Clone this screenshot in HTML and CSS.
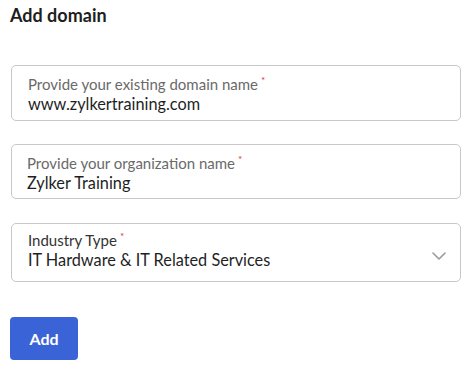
FILE: index.html
```html
<!DOCTYPE html>
<html>
<head>
<meta charset="utf-8">
<link rel="stylesheet" href="styles.css">
</head>
<body>
<div class="page">
  <h1 class="title">Add domain</h1>
  <div class="field f1">
    <div class="label">Provide your existing domain name<span class="req">*</span></div>
    <div class="value">www.zylkertraining.com</div>
  </div>
  <div class="field f2">
    <div class="label">Provide your organization name<span class="req">*</span></div>
    <div class="value">Zylker Training</div>
  </div>
  <div class="field f3 select">
    <div class="texts">
      <div class="label">Industry Type<span class="req">*</span></div>
      <div class="value">IT Hardware &amp; IT Related Services</div>
    </div>
    <svg class="chev" width="14" height="8" viewBox="0 0 14 8"><path d="M1 1 L7 7 L13 1" fill="none" stroke="#9a9a9a" stroke-width="1.6" stroke-linecap="round" stroke-linejoin="round"/></svg>
  </div>
  <button class="btn">Add</button>
</div>
</body>
</html>
```
FILE: styles.css
```css
html, body { margin: 0; padding: 0; background: #fff; }
body { font-family: Lato, "Noto Sans", sans-serif; color: #222; }
.page { padding: 4px 13px 0 11px; display: flex; flex-direction: column; }
.title { margin: 0 0 0 -1px; font-size: 18px; font-weight: 700; line-height: 22px; color: #1e1e1e; }
.field {
  box-sizing: border-box;
  border: 1.5px solid #c8c8c8;
  border-radius: 5px;
  padding: 9px 16px 0 16px;
  display: flex;
  flex-direction: column;
}
.f1 { margin-top: 39px; height: 56px; }
.f2 { margin-top: 23px; height: 55px; padding-left: 15px; }
.f3 { margin-top: 24px; height: 59px; padding-top: 7px; flex-direction: row; align-items: center; justify-content: space-between; padding-right: 14px; }
.f3 .texts { display: flex; flex-direction: column; align-self: flex-start; }
.label { font-size: 15px; line-height: 18px; color: #6a6a6a; }
.f3 .label { color: #333; }
.value { font-size: 16.3px; line-height: 21px; color: #1f1f1f; }
.req { color: #d9323c; font-size: 10px; vertical-align: top; margin-left: 3px; line-height: 11px; }
.chev { display: block; margin-top: 0; }
.btn {
  margin-top: 35px;
  margin-left: -1px;
  width: 68px; height: 43px;
  border: none; border-radius: 4px;
  background: #3a63d7;
  color: #fff;
  font-family: Lato, "Noto Sans", sans-serif;
  font-size: 16px; font-weight: 700;
  padding: 0;
}
```
